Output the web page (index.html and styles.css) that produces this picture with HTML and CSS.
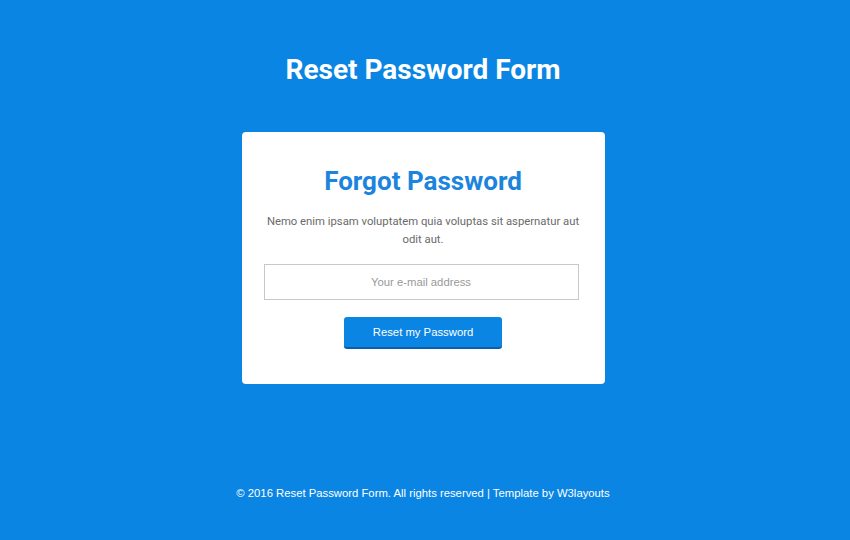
FILE: index.html
```html
<!DOCTYPE html>
<html>
<head>
<meta charset="utf-8">
<link rel="stylesheet" href="styles.css">
</head>
<body>
<div class="page">
  <h1 class="title">Reset Password Form</h1>
  <div class="card">
    <h2 class="card-title">Forgot Password</h2>
    <p class="card-text">Nemo enim ipsam voluptatem quia voluptas sit aspernatur aut odit aut.</p>
    <div class="field">Your e-mail address</div>
    <div class="actions"><button class="btn">Reset my Password</button></div>
  </div>
  <footer class="footer">© 2016 Reset Password Form. All rights reserved | Template by W3layouts</footer>
</div>
</body>
</html>
```
FILE: styles.css
```css
html, body {
  margin: 0;
  padding: 0;
  background: #0b85e3;
}
.page {
  width: 846px;
  height: 540px;
  display: flex;
  flex-direction: column;
  align-items: center;
}
.title {
  margin: 53px 0 0;
  font-family: Roboto, "Liberation Sans", sans-serif;
  font-weight: 700;
  font-size: 28px;
  line-height: 34px;
  color: #fff;
}
.card {
  margin-top: 45px;
  height: 252px;
  box-sizing: border-box;
  padding: 0 22px;
  width: 363px;
  background: #fff;
  border-radius: 4px;
  display: flex;
  flex-direction: column;
  align-items: stretch;
}
.card-title {
  margin: 34px 0 0;
  text-align: center;
  font-family: Roboto, "Liberation Sans", sans-serif;
  font-weight: 700;
  font-size: 26px;
  line-height: 30px;
  color: #1b84dd;
}
.card-text {
  margin: 17px 0 0;
  text-align: center;
  font-family: Roboto, "Liberation Sans", sans-serif;
  font-size: 11.3px;
  line-height: 18px;
  color: #6a6a6a;
}
.field {
  margin: 15px 4px 0 0;
  height: 36px;
  box-sizing: border-box;
  border: 1px solid #c8c8c8;
  display: flex;
  align-items: center;
  justify-content: center;
  font-family: "Liberation Sans", Arial, sans-serif;
  font-size: 11.3px;
  color: #999;
}
.actions {
  margin-top: 17px;
  display: flex;
  justify-content: center;
}
.btn {
  width: 158px;
  height: 32px;
  border: none;
  border-bottom: 2px solid #0a5fa8;
  border-radius: 3px;
  background: #0b85e3;
  color: #fff;
  font-family: "Liberation Sans", Arial, sans-serif;
  font-size: 11.3px;
  padding: 0;
}
.footer {
  margin-top: auto;
  margin-bottom: 41px;
  font-family: "Liberation Sans", Arial, sans-serif;
  font-size: 11.3px;
  color: #fff;
}
```
